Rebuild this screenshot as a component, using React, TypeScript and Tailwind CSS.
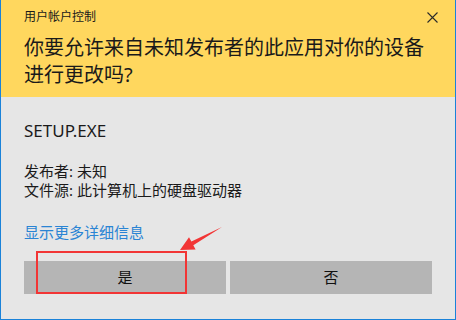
const FONT = '"Segoe UI", "Noto Sans", "Noto Sans CJK SC", sans-serif'

// UAC prompt with the red callout drawn over the "yes" button
export default function App() {
  return (
    <div
      className="relative w-[456px] h-[320px] flex flex-col bg-[#e6e6e6] border-x border-b border-[#1a82d9] text-[#1a1a1a]"
      style={{ fontFamily: FONT }}
    >
      {/* Yellow header */}
      <div className="h-[97px] bg-[#ffd75e] px-[23px] pt-[9px]">
        <div className="flex items-center justify-between h-4">
          <span className="text-[12px] leading-4">用户帐户控制</span>
          <svg width="11" height="11" viewBox="0 0 11 11" className="mr-[-6px]">
            <path d="M0.5 0.5L10.5 10.5M10.5 0.5L0.5 10.5" stroke="#2a2a2a" strokeWidth="1.1" />
          </svg>
        </div>
        <p className="mt-[9px] text-[20px] leading-[27px]">
          你要允许来自未知发布者的此应用对你的设备进行更改吗?
        </p>
      </div>

      {/* Body */}
      <div className="flex-1 flex flex-col px-[23px] pt-[24px]">
        <div className="text-[17px] leading-5">SETUP.EXE</div>
        <div className="mt-[21px] text-[15px] leading-[19px]">
          <div>发布者: 未知</div>
          <div>文件源: 此计算机上的硬盘驱动器</div>
        </div>
        <div className="mt-[22px] text-[15px] leading-5 text-[#2a84d4]">显示更多详细信息</div>
        <div className="mt-[19px] flex gap-[4px]">
          <button className="flex-1 h-[33px] bg-[#b5b5b5] text-[15px] text-[#111]">是</button>
          <button className="flex-1 h-[33px] bg-[#b5b5b5] text-[15px] text-[#111]">否</button>
        </div>
      </div>

      {/* Annotation overlay */}
      <div className="absolute left-[35px] top-[251px] w-[151px] h-[43px] border-2 border-[#f23535]" />
      <svg className="absolute left-0 top-0 pointer-events-none" width="456" height="320">
        <polygon
          points="221,227 192.3,245.2 194.6,249.6 179,250 188,237.2 190.4,241.6"
          fill="#f23535"
        />
      </svg>
    </div>
  )
}
